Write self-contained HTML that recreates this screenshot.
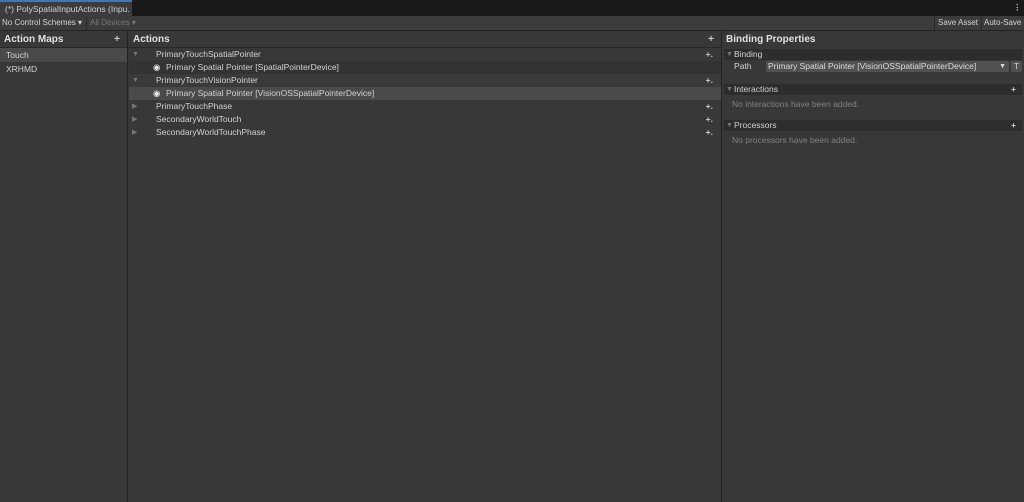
<html><head><style>
body{margin:0;width:1024px;height:502px;background:#383838;font-family:"Liberation Sans",sans-serif;font-size:8.5px;color:#d2d2d2;position:relative;overflow:hidden}
div{box-sizing:border-box}
.a{position:absolute}
.hdr{font-weight:bold;font-size:10px;color:#e0e0e0;height:17px;line-height:18px;padding-left:4px;background:#383838;border-bottom:1px solid #2a2a2a}
.row{position:absolute;height:13px;line-height:13px;left:0;right:0}
.plus{position:absolute;right:8px;font-weight:bold;color:#ccc}
.tri{position:absolute;left:3px;color:#777;font-size:7px}
.sec{position:absolute;left:2px;right:2px;height:11px;line-height:11px;background:#2d2d2d;padding-left:10px}
.note{position:absolute;left:10px;color:#808080}
</style></head><body>
<div class="a" style="left:0;top:0;width:1024px;height:16px;background:#191919"></div>
<div class="a" style="left:0;top:0;width:132px;height:16px;background:#3c3c3c;border-top:2px solid #3a79bb;line-height:14px;padding-left:5px;color:#d0d0d0">(*) PolySpatialInputActions (Inpu.</div>
<div class="a" style="left:1013px;top:2px;color:#ccc;font-weight:bold">⋮</div>
<div class="a" style="left:0;top:16px;width:1024px;height:15px;background:#3c3c3c;border-bottom:1px solid #232323;line-height:14px;font-size:8px">
 <span class="a" style="left:2px">No Control Schemes ▾</span>
 <span class="a" style="left:86px;top:0;height:14px;border-left:1px solid #2a2a2a;padding-left:3px;color:#777">All Devices ▾</span>
 <span class="a" style="left:934px;height:14px;border-left:1px solid #2a2a2a;padding-left:3px">Save Asset</span>
 <span class="a" style="left:981px;height:14px;border-left:1px solid #2a2a2a;padding-left:2px;white-space:nowrap">Auto-Save</span>
</div>
<div class="a" style="left:0;top:31px;width:128px;height:471px;border-right:1px solid #232323">
 <div class="hdr">Action Maps<span class="plus" style="right:7px">+</span></div>
 <div class="row" style="top:17px;background:#4a4a4a;padding-left:6px;height:14px;line-height:15px">Touch</div>
 <div class="row" style="top:32px;padding-left:6px">XRHMD</div>
</div>
<div class="a" style="left:129px;top:31px;width:593px;height:471px;border-right:1px solid #232323">
 <div class="hdr">Actions<span class="plus" style="right:7px">+</span></div>
 <div class="row" style="top:17px;padding-left:27px"><span class="tri">▼</span>PrimaryTouchSpatialPointer<span class="plus">+.</span></div>
 <div class="row" style="top:30px;padding-left:37px;background:#333">Primary Spatial Pointer [SpatialPointerDevice]<span class="a" style="left:24px;color:#eee">◉</span></div>
 <div class="row" style="top:43px;padding-left:27px;background:#3a3a3a"><span class="tri">▼</span>PrimaryTouchVisionPointer<span class="plus">+.</span></div>
 <div class="row" style="top:56px;padding-left:37px;background:#4a4a4a">Primary Spatial Pointer [VisionOSSpatialPointerDevice]<span class="a" style="left:24px;color:#eee">◉</span></div>
 <div class="row" style="top:69px;padding-left:27px"><span class="tri">▶</span>PrimaryTouchPhase<span class="plus">+.</span></div>
 <div class="row" style="top:82px;padding-left:27px"><span class="tri">▶</span>SecondaryWorldTouch<span class="plus">+.</span></div>
 <div class="row" style="top:95px;padding-left:27px"><span class="tri">▶</span>SecondaryWorldTouchPhase<span class="plus">+.</span></div>
</div>
<div class="a" style="left:722px;top:31px;width:302px;height:471px">
 <div class="hdr" style="border:none">Binding Properties</div>
 <div class="sec" style="top:18px"><span class="tri" style="left:2px">▼</span>Binding</div>
 <div class="a" style="left:12px;top:30px">Path</div>
 <div class="a" style="left:44px;top:30px;width:243px;height:11px;line-height:11px;background:#515151;border-radius:2px;padding-left:2px;color:#ddd">Primary Spatial Pointer [VisionOSSpatialPointerDevice]<span class="a" style="right:3px;font-size:7px">▼</span></div>
 <div class="a" style="left:289px;top:30px;width:11px;height:11px;line-height:11px;background:#515151;border-radius:2px;text-align:center">T</div>
 <div class="sec" style="top:53px"><span class="tri" style="left:2px">▼</span>Interactions<span class="plus" style="right:6px">+</span></div>
 <div class="note" style="top:68px">No interactions have been added.</div>
 <div class="sec" style="top:89px"><span class="tri" style="left:2px">▼</span>Processors<span class="plus" style="right:6px">+</span></div>
 <div class="note" style="top:104px">No processors have been added.</div>
</div>
</body></html>
